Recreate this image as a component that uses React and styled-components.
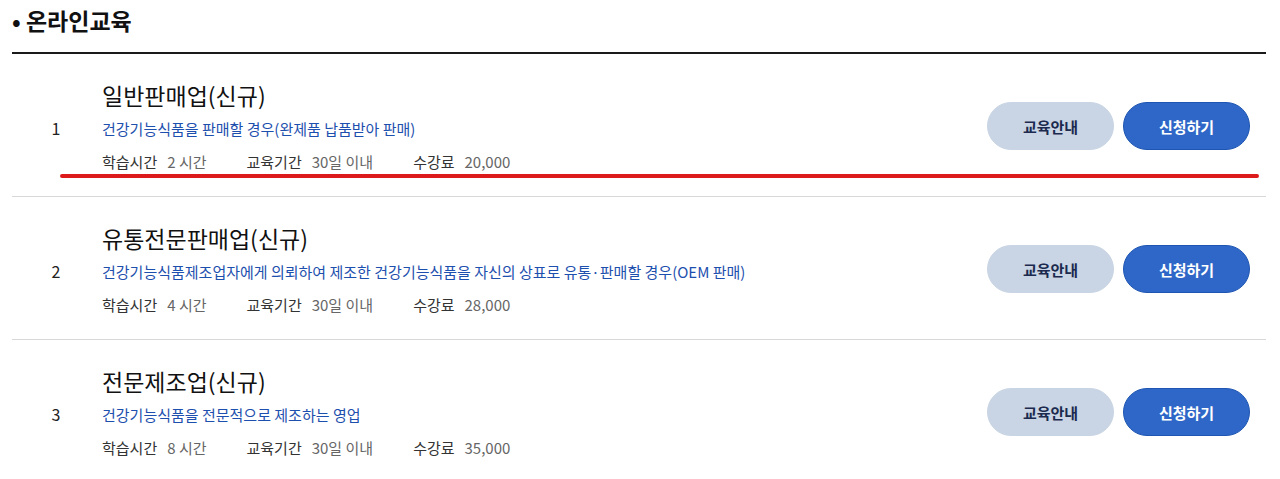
import React from 'react'
import styled, { createGlobalStyle } from 'styled-components'

const GlobalStyle = createGlobalStyle`
  body {
    margin: 0;
    background: #fff;
    font-family: "Noto Sans CJK KR", "Noto Sans", sans-serif;
    color: #111;
  }
`;

const courses = [
  { no: 1, title: '일반판매업(신규)', desc: '건강기능식품을 판매할 경우(완제품 납품받아 판매)', hours: '2 시간', fee: '20,000', marked: true },
  { no: 2, title: '유통전문판매업(신규)', desc: '건강기능식품제조업자에게 의뢰하여 제조한 건강기능식품을 자신의 상표로 유통·판매할 경우(OEM 판매)', hours: '4 시간', fee: '28,000' },
  { no: 3, title: '전문제조업(신규)', desc: '건강기능식품을 전문적으로 제조하는 영업', hours: '8 시간', fee: '35,000' },
];

const App = () => {
  return (
    <Wrap>
      <GlobalStyle />
      <Heading>• 온라인교육</Heading>
      <List>
        {courses.map(c => (
          <Row key={c.no}>
            <Num>{c.no}</Num>
            <Body>
              <Title>{c.title}</Title>
              <Desc>{c.desc}</Desc>
              <Meta>
                <MetaItem><b>학습시간</b><span>{c.hours}</span></MetaItem>
                <MetaItem><b>교육기간</b><span>30일 이내</span></MetaItem>
                <MetaItem><b>수강료</b><span>{c.fee}</span></MetaItem>
              </Meta>
            </Body>
            <Actions>
              <Btn>교육안내</Btn>
              <Btn primary>신청하기</Btn>
            </Actions>
            {c.marked && <Mark />}
          </Row>
        ))}
      </List>
    </Wrap>
  )
}

const Wrap = styled.div`
  margin: 0 14px 0 12px;
`;

const Heading = styled.h2`
  margin: 0;
  height: 40px;
  line-height: 40px;
  font-size: 23px;
  font-weight: 700;
  color: #111;
  padding-bottom: 12px;
  border-bottom: 2px solid #1a1a1a;
`;

const List = styled.div``;

const Row = styled.div`
  position: relative;
  display: flex;
  align-items: center;
  padding: 26px 16px 24px 0;
  border-bottom: 1px solid #d8d8d8;
`;

const Num = styled.div`
  width: 88px;
  flex: none;
  text-align: center;
  font-size: 16px;
  color: #222;
  padding-top: 4px;
`;

const Body = styled.div`
  flex: 1;
  padding-left: 2px;
`;

const Title = styled.div`
  font-size: 23px;
  line-height: 30px;
  color: #111;
`;

const Desc = styled.div`
  margin-top: 9px;
  font-size: 15px;
  line-height: 20px;
  color: #1d4fae;
`;

const Meta = styled.div`
  margin-top: 13px;
  display: flex;
  font-size: 15px;
  line-height: 20px;
`;

const MetaItem = styled.div`
  margin-right: 40px;
  b {
    font-weight: 400;
    color: #333;
    margin-right: 10px;
  }
  span {
    color: #666;
  }
`;

const Actions = styled.div`
  display: flex;
  gap: 9px;
`;

const Btn = styled.button`
  width: 127px;
  height: 48px;
  border-radius: 24px;
  border: 1px solid ${p => (p.primary ? '#1f56b2' : '#c9d5e4')};
  background: ${p => (p.primary ? '#2e67c7' : '#c9d5e4')};
  color: ${p => (p.primary ? '#fff' : '#1b2a4e')};
  font-family: inherit;
  font-size: 15px;
  font-weight: 700;
  cursor: pointer;
`;

const Mark = styled.div`
  position: absolute;
  left: 48px;
  top: 120px;
  width: 1199px;
  height: 4px;
  border-radius: 2px;
  background: #dc1a1c;
`;

export default App
